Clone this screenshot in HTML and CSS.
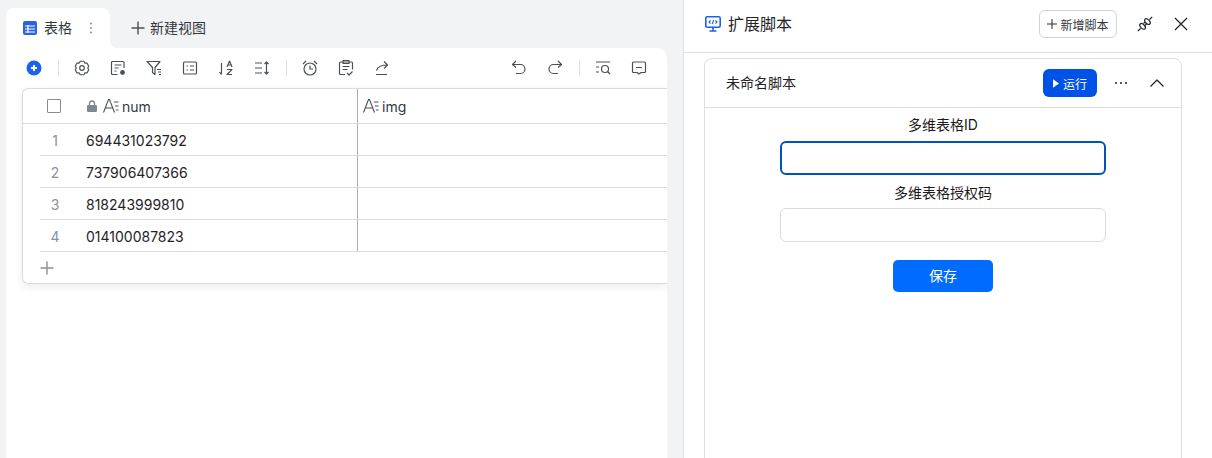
FILE: index.html
```html
<!DOCTYPE html>
<html>

<head>
  <title>表格</title>
  <link rel="stylesheet" href="styles.css">
</head>

<body>
  <div class="app">
    <div class="workspace">
      <div class="tabs">
        <div class="tab">
          <svg class="tab-icon" viewBox="0 0 14 14"><rect width="14" height="14" rx="2" fill="#2b62e3"/><path d="M2 5h10M2 8h10M2 11h10M5 4v8" stroke="#fff" stroke-width="1.2" fill="none"/></svg>
          <span>表格</span>
          <svg class="tab-dots" viewBox="0 0 4 12"><circle cx="2" cy="1.5" r="1"/><circle cx="2" cy="6" r="1"/><circle cx="2" cy="10.5" r="1"/></svg>
        </div>
        <div class="new-view">
          <svg class="plus-icon" viewBox="0 0 14 14"><path d="M7 .5v13M.5 7h13"/></svg>
          <span>新建视图</span>
        </div>
      </div>

      <div class="panel">
        <div class="toolbar">
          <div class="tool"><svg class="add-icon" viewBox="0 0 16 16"><circle cx="8" cy="8" r="7.500" fill="#1c62e8"/><path d="M5 8h6M8 5v6" stroke="#fff" stroke-width="2" fill="none"/></svg></div>
          <div class="divider"></div>
          <div class="tool"><svg class="line" viewBox="0 0 18 18"><path d="M7.190 2.240H10.810L11.850 4.060 13.950 4.050 15.760 7.190 14.700 9 15.760 10.810 13.950 13.950 11.850 13.940 10.810 15.760H7.190L6.150 13.940 4.050 13.950 2.240 10.810 3.300 9 2.240 7.190 4.050 4.050 6.150 4.060z"/><circle cx="9" cy="9" r="2.300"/></svg></div>
          <div class="tool"><svg class="line" viewBox="0 0 18 18"><path d="M8.500 15.500H3.500a1 1 0 0 1-1-1V3.500a1 1 0 0 1 1-1h10.500a1 1 0 0 1 1 1V9M5.500 6h7M5.500 9h4M5.500 12h2"/><circle cx="13.500" cy="13.500" r="1.800" fill="#4b5058"/></svg></div>
          <div class="tool"><svg class="line" viewBox="0 0 18 18"><path d="M2 2.500h13l-5 6v7L7.500 13.500V8.500zM12 10.500h4M13 13h3M14 15.500h2"/></svg></div>
          <div class="tool"><svg class="line" viewBox="0 0 18 18"><rect x="2.500" y="3" width="13" height="12" rx="1"/><path d="M5.500 7h1.500M5.500 11h1.500M9 7h4M9 11h4"/></svg></div>
          <div class="tool"><svg class="line" viewBox="0 0 18 18"><path d="M4.500 4v11.500M2.500 13l2 2.500M10 8l2.500-6 2.500 6M10.800 6h3.400M10 10.500h5l-5 5h5"/></svg></div>
          <div class="tool"><svg class="line" viewBox="0 0 18 18"><path d="M2 4h7M2 9h7M2 14h7M13.500 3v12M11.500 5l2-2 2 2M11.500 13l2 2 2-2"/></svg></div>
          <div class="divider"></div>
          <div class="tool"><svg class="line" viewBox="0 0 18 18"><circle cx="9" cy="10" r="6"/><path d="M9 6.500V10h3M2 5l3-3M16 5l-3-3"/></svg></div>
          <div class="tool"><svg class="line" viewBox="0 0 18 18"><path d="M8 15.500H3.500a1 1 0 0 1-1-1V4a1 1 0 0 1 1-1h11a1 1 0 0 1 1 1v6.500M6 1.500h6v3H6zM5.500 7.500h7M5.500 10.500h5M10 14l2 2 3.500-3.500"/></svg></div>
          <div class="tool"><svg class="line" viewBox="0 0 18 18"><path d="M3.500 11.500C4.500 8 7.500 6 14.500 6M11 2.500L14.500 6 11 9.500M3 15.500h11"/></svg></div>
          <div class="toolbar-right">
            <div class="tool"><svg class="line" viewBox="0 0 18 18"><path d="M6 2L2.500 5.500 6 8.500M3 5.500h7.500a4.500 4.500 0 0 1 0 9H6"/></svg></div>
            <div class="tool"><svg class="line" viewBox="0 0 18 18"><path d="M12 2l3.500 3.500L12 8.500M15 5.500H7.500a4.500 4.500 0 0 0 0 9H12"/></svg></div>
            <div class="divider"></div>
            <div class="tool"><svg class="line" viewBox="0 0 18 18"><path d="M2 3h14M2 8h3M2 13h3"/><circle cx="11" cy="10" r="3.500"/><path d="M13.500 12.500L16 15"/></svg></div>
            <div class="tool"><svg class="line" viewBox="0 0 18 18"><path d="M3.500 3h11a1 1 0 0 1 1 1v8.500a1 1 0 0 1-1 1H11l-2 1.500-2-1.500H3.500a1 1 0 0 1-1-1V4a1 1 0 0 1 1-1zM6 8.500h6"/></svg></div>
          </div>
        </div>

        <div class="sheet">
          <div class="sheet-head">
            <div class="head-check"><span class="checkbox"></span></div>
            <div class="head-col head-num">
              <svg class="lock-icon" viewBox="0 0 10 12"><path d="M2.500 5V3.500a2.500 2.500 0 0 1 5 0V5" fill="none" stroke="#7f8690" stroke-width="1.300"/><rect y="5" width="10" height="7" rx="1.200" fill="#7f8690"/></svg>
              <svg class="field-icon" viewBox="0 0 16 16"><path d="M.5 14.500L5.500 1.500h1l5 13M2.500 10h7M11 4h4.500M12 8h3.500M13 12h2.500"/></svg>
              <span>num</span>
            </div>
            <div class="head-col">
              <svg class="field-icon" viewBox="0 0 16 16"><path d="M.5 14.500L5.500 1.500h1l5 13M2.500 10h7M11 4h4.500M12 8h3.500M13 12h2.500"/></svg>
              <span>img</span>
            </div>
          </div>
          <div class="sheet-row"><div class="row-num">1</div><div class="row-val">694431023792</div><div></div></div>
          <div class="sheet-row"><div class="row-num">2</div><div class="row-val">737906407366</div><div></div></div>
          <div class="sheet-row"><div class="row-num">3</div><div class="row-val">818243999810</div><div></div></div>
          <div class="sheet-row"><div class="row-num">4</div><div class="row-val">014100087823</div><div></div></div>
          <div class="add-row"><svg viewBox="0 0 14 14"><path d="M7 .5v13M.5 7h13"/></svg></div>
        </div>
      </div>
    </div>

    <div class="side">
      <div class="side-head">
        <svg class="script-icon" viewBox="0 0 16 16"><rect x=".8" y=".8" width="14.400" height="10.400" rx="1.500" fill="none" stroke="#1c62e8" stroke-width="1.600"/><path d="M8 11.500v3M4.500 15h7" stroke="#1c62e8" stroke-width="1.600" fill="none"/><path d="M5.500 4.500L4 6l1.500 1.500M10.500 4.500L12 6l-1.500 1.500M8.800 4L7.200 8" stroke="#1c62e8" stroke-width="1.100" fill="none"/></svg>
        <div class="side-title">扩展脚本</div>
        <div class="new-script">
          <svg viewBox="0 0 10 10"><path d="M5 0v10M0 5h10"/></svg>
          <span>新增脚本</span>
        </div>
        <div class="head-btn"><svg class="line dark" viewBox="0 0 16 16"><ellipse cx="5.600" cy="10.400" rx="2" ry="3.400" transform="rotate(-45 5.600 10.400)"/><ellipse cx="10.400" cy="5.600" rx="2" ry="3.400" transform="rotate(-45 10.400 5.600)"/><path d="M.8 15.200L3.500 12.500M15.200.8L12.500 3.500M6.500 7.500L8 6M8 9.500L9.500 8"/></svg></div>
        <div class="head-btn"><svg class="line dark close-icon" viewBox="0 0 14 14"><path d="M1 1l12 12M13 1L1 13"/></svg></div>
      </div>

      <div class="card">
        <div class="card-head">
          <div class="card-title">未命名脚本</div>
          <div class="run-btn">
            <svg viewBox="0 0 7 10"><path d="M0 0l7 5-7 5z" fill="#fff"/></svg>
            <span>运行</span>
          </div>
          <div class="card-btn"><svg viewBox="0 0 14 4"><circle cx="2" cy="2" r="1" fill="#1f2329"/><circle cx="7" cy="2" r="1" fill="#1f2329"/><circle cx="12" cy="2" r="1" fill="#1f2329"/></svg></div>
          <div class="card-btn"><svg class="line dark" viewBox="0 0 14 8"><path d="M.5 7.500L7 1l6.500 6.500"/></svg></div>
        </div>
        <div class="form">
          <label class="form-label">多维表格ID</label>
          <input class="form-input focused" type="text">
          <label class="form-label second">多维表格授权码</label>
          <input class="form-input" type="text">
          <button class="save-btn" type="button">保存</button>
        </div>
      </div>
    </div>
  </div>
</body>

</html>
```

FILE: styles.css
```css
html,
body {
  margin: 0;
  height: 458px;
  overflow: hidden;
}

body {
  font-family: Inter, "Noto Sans CJK SC", sans-serif;
  font-size: 14px;
  color: #1f2329;
  background-color: #fff;
}

svg {
  display: block;
}

.line {
  fill: none;
  stroke: #4b5058;
  stroke-width: 1.2;
  stroke-linejoin: round;
}

.line.dark {
  stroke: #1f2329;
}

.app {
  display: flex;
  height: 458px;
}

/* left side */
.workspace {
  width: 684px;
  flex-shrink: 0;
  box-sizing: border-box;
  padding: 8px 16px 0 6px;
  background-color: #f2f3f5;
  border-right: 1px solid #dfe1e4;
  display: flex;
  flex-direction: column;
}

.tabs {
  display: flex;
  height: 40px;
  flex-shrink: 0;
}

.tab {
  position: relative;
  width: 104px;
  box-sizing: border-box;
  padding-left: 17px;
  display: flex;
  align-items: center;
  background-color: #fff;
  border-radius: 8px 8px 0 0;
  color: #33373d;
}

.tab span,
.new-view span {
  padding-bottom: 2px;
}

.tab::after {
  content: "";
  position: absolute;
  left: 100%;
  bottom: 0;
  width: 8px;
  height: 8px;
  background: radial-gradient(circle at 100% 0, transparent 8px, #fff 8px);
}

.tab-icon {
  width: 14px;
  height: 14px;
  margin-right: 7px;
}

.tab-dots {
  width: 4px;
  height: 12px;
  margin-left: 17px;
  fill: #8a9099;
}

.new-view {
  display: flex;
  align-items: center;
  margin-left: 21px;
  color: #33373d;
}

.plus-icon {
  width: 14px;
  height: 14px;
  margin-right: 5px;
  fill: none;
  stroke: #4b5058;
  stroke-width: 1.4;
}

.panel {
  flex: 1;
  background-color: #fff;
  border-radius: 0 10px 0 0;
  overflow: hidden;
}

.toolbar {
  height: 40px;
  padding: 0 10px;
  display: flex;
  align-items: center;
}

.toolbar-right {
  margin-left: auto;
  display: flex;
  align-items: center;
}

.tool {
  width: 36px;
  height: 24px;
  display: flex;
  align-items: center;
  justify-content: center;
}

.tool svg {
  width: 18px;
  height: 18px;
}

.tool svg.add-icon {
  width: 16px;
  height: 16px;
}

.divider {
  width: 1px;
  height: 16px;
  margin: 0 5px 0 6px;
  background-color: #dcdfe3;
}

/* table */
.sheet {
  margin-left: 16px;
  border: 1px solid #d9dbde;
  border-right: none;
  border-radius: 6px 0 0 6px;
  box-shadow: 0 3px 8px rgba(0, 0, 0, 0.08);
}

.sheet-head {
  height: 34px;
  display: grid;
  grid-template-columns: 63px 272px 1fr;
  border-bottom: 1px solid #d9dbde;
  color: #33373d;
}

.head-check {
  display: flex;
  align-items: center;
  padding-left: 24px;
}

.checkbox {
  width: 12px;
  height: 12px;
  border: 1.5px solid #868c96;
  border-radius: 1px;
}

.head-col {
  display: flex;
  align-items: center;
  padding-left: 5px;
}

.head-num {
  padding-left: 1px;
  border-right: 1px solid #a9acb1;
}

.lock-icon {
  width: 10px;
  height: 12px;
  margin-right: 6px;
}

.field-icon {
  width: 16px;
  height: 16px;
  margin-right: 3px;
  fill: none;
  stroke: #4b5058;
  stroke-width: 1.1;
}

.sheet-row {
  height: 31px;
  margin-left: 17px;
  display: grid;
  grid-template-columns: 30px 288px 1fr;
  grid-template-rows: 31px;
  border-bottom: 1px solid #d9dbde;
  line-height: 33px;
}

.row-num {
  text-align: center;
  color: #8a9099;
}

.row-val {
  padding-left: 16px;
  border-right: 1px solid #a9acb1;
}

.add-row {
  height: 31px;
  padding-left: 17px;
  display: flex;
  align-items: center;
}

.add-row svg {
  width: 14px;
  height: 14px;
  fill: none;
  stroke: #8a9099;
  stroke-width: 1.4;
}

/* right side */
.side {
  flex: 1;
  min-width: 0;
  display: flex;
  flex-direction: column;
}

.side-head {
  height: 53px;
  box-sizing: border-box;
  flex-shrink: 0;
  padding: 0 13px 4px 21px;
  display: flex;
  align-items: center;
  border-bottom: 1px solid #dfe1e4;
}

.script-icon {
  width: 16px;
  height: 16px;
  margin-right: 7px;
}

.side-title {
  font-size: 16px;
  flex: 1;
  padding-bottom: 2px;
}

.new-script {
  width: 78px;
  height: 28px;
  box-sizing: border-box;
  display: flex;
  align-items: center;
  justify-content: center;
  gap: 3px;
  border: 1px solid #cfd1d4;
  border-radius: 6px;
  font-size: 12px;
  color: #33373d;
  margin-right: 10px;
}

.new-script svg {
  width: 10px;
  height: 10px;
  fill: none;
  stroke: #33373d;
  stroke-width: 1.1;
}

.head-btn {
  width: 36px;
  display: flex;
  justify-content: center;
}

.head-btn svg {
  width: 16px;
  height: 16px;
}

.head-btn svg.close-icon {
  width: 14px;
  height: 14px;
}

.card {
  margin: 5px 30px 0 20px;
  min-height: 420px;
  flex-shrink: 0;
  box-sizing: border-box;
  border: 1px solid #dcdee1;
  border-radius: 8px;
}

.card-head {
  height: 48px;
  padding: 0 6px 0 21px;
  display: flex;
  align-items: center;
  border-bottom: 1px solid #dcdee1;
}

.card-title {
  flex: 1;
  padding-bottom: 2px;
}

.run-btn {
  width: 54px;
  height: 28px;
  display: flex;
  align-items: center;
  justify-content: center;
  gap: 4px;
  background-color: #0052e6;
  border-radius: 6px;
  color: #fff;
  font-size: 12px;
}

.run-btn svg {
  width: 6px;
  height: 9px;
}

.card-btn {
  width: 36px;
  display: flex;
  justify-content: center;
}

.run-btn + .card-btn {
  margin-left: 6px;
}

.card-btn svg {
  width: 14px;
}

.form {
  display: flex;
  flex-direction: column;
  align-items: center;
  padding-top: 7px;
}

.form-label {
  height: 20px;
  line-height: 20px;
  margin-bottom: 6px;
  color: #1a1a1a;
}

.form-label.second {
  margin-top: 8px;
  margin-bottom: 5px;
}

.form-input {
  width: 326px;
  height: 34px;
  box-sizing: border-box;
  border: 1px solid #d9dbde;
  border-radius: 6px;
  outline: none;
  background-color: #fff;
}

.form-input.focused {
  border: 2px solid #0053bd;
}

.save-btn {
  width: 100px;
  height: 32px;
  margin-top: 18px;
  padding: 0 0 2px;
  border: none;
  border-radius: 5px;
  background-color: #006cff;
  color: #fff;
  font-family: inherit;
  font-size: 14px;
}
```
